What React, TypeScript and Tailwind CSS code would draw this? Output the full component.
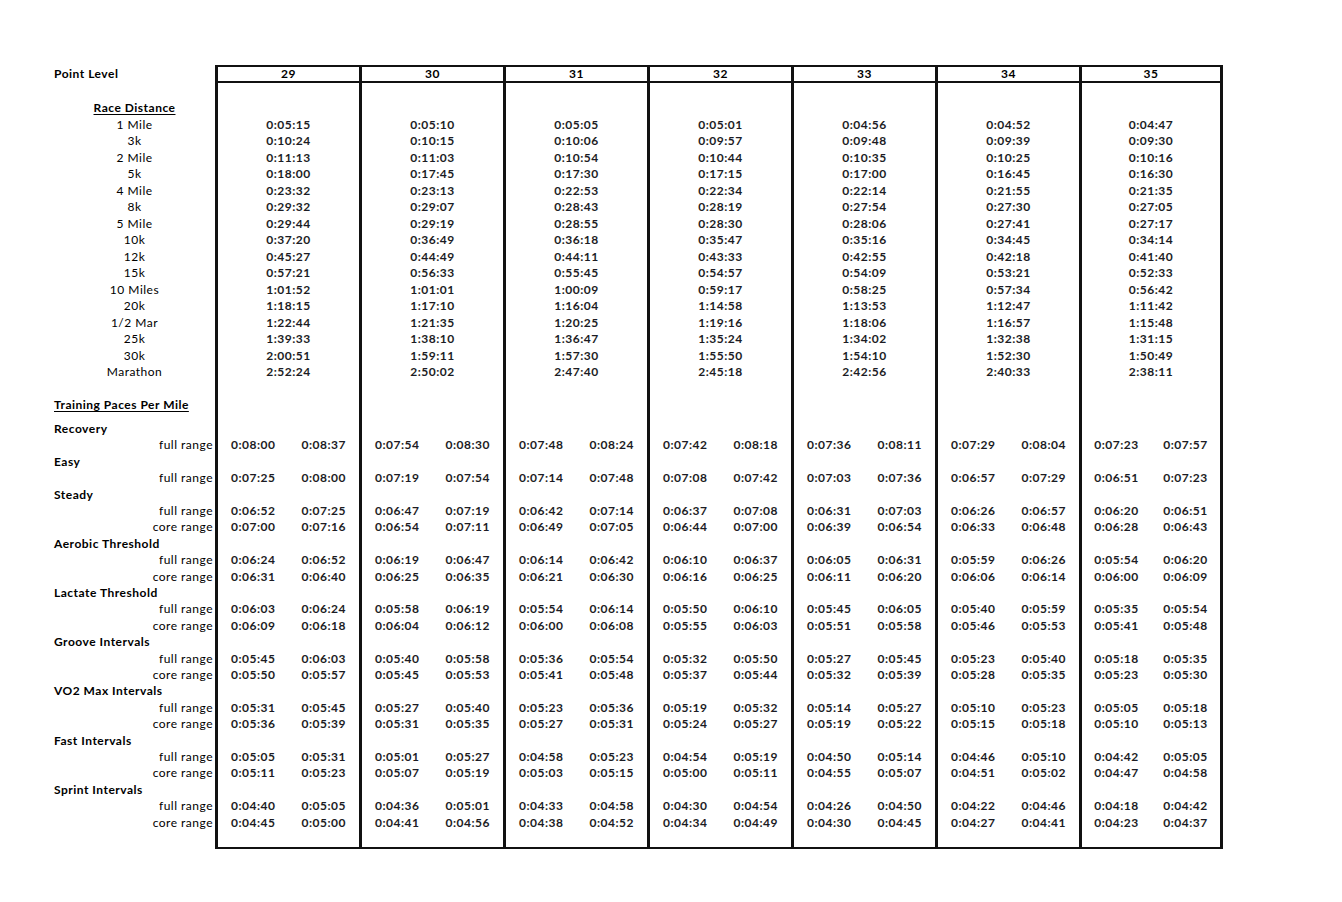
import React from "react";

const levels = [29, 30, 31, 32, 33, 34, 35];

const race: [string, string[]][] = [
  ["1 Mile", ["0:05:15", "0:05:10", "0:05:05", "0:05:01", "0:04:56", "0:04:52", "0:04:47"]],
  ["3k", ["0:10:24", "0:10:15", "0:10:06", "0:09:57", "0:09:48", "0:09:39", "0:09:30"]],
  ["2 Mile", ["0:11:13", "0:11:03", "0:10:54", "0:10:44", "0:10:35", "0:10:25", "0:10:16"]],
  ["5k", ["0:18:00", "0:17:45", "0:17:30", "0:17:15", "0:17:00", "0:16:45", "0:16:30"]],
  ["4 Mile", ["0:23:32", "0:23:13", "0:22:53", "0:22:34", "0:22:14", "0:21:55", "0:21:35"]],
  ["8k", ["0:29:32", "0:29:07", "0:28:43", "0:28:19", "0:27:54", "0:27:30", "0:27:05"]],
  ["5 Mile", ["0:29:44", "0:29:19", "0:28:55", "0:28:30", "0:28:06", "0:27:41", "0:27:17"]],
  ["10k", ["0:37:20", "0:36:49", "0:36:18", "0:35:47", "0:35:16", "0:34:45", "0:34:14"]],
  ["12k", ["0:45:27", "0:44:49", "0:44:11", "0:43:33", "0:42:55", "0:42:18", "0:41:40"]],
  ["15k", ["0:57:21", "0:56:33", "0:55:45", "0:54:57", "0:54:09", "0:53:21", "0:52:33"]],
  ["10 Miles", ["1:01:52", "1:01:01", "1:00:09", "0:59:17", "0:58:25", "0:57:34", "0:56:42"]],
  ["20k", ["1:18:15", "1:17:10", "1:16:04", "1:14:58", "1:13:53", "1:12:47", "1:11:42"]],
  ["1/2 Mar", ["1:22:44", "1:21:35", "1:20:25", "1:19:16", "1:18:06", "1:16:57", "1:15:48"]],
  ["25k", ["1:39:33", "1:38:10", "1:36:47", "1:35:24", "1:34:02", "1:32:38", "1:31:15"]],
  ["30k", ["2:00:51", "1:59:11", "1:57:30", "1:55:50", "1:54:10", "1:52:30", "1:50:49"]],
  ["Marathon", ["2:52:24", "2:50:02", "2:47:40", "2:45:18", "2:42:56", "2:40:33", "2:38:11"]],
];

type Range = string[]; // 14 values: pairs per level
type Pace = { name: string; full: Range; core?: Range };

const paces: Pace[] = [
  {
    name: "Recovery",
    full: ["0:08:00", "0:08:37", "0:07:54", "0:08:30", "0:07:48", "0:08:24", "0:07:42", "0:08:18", "0:07:36", "0:08:11", "0:07:29", "0:08:04", "0:07:23", "0:07:57"],
  },
  {
    name: "Easy",
    full: ["0:07:25", "0:08:00", "0:07:19", "0:07:54", "0:07:14", "0:07:48", "0:07:08", "0:07:42", "0:07:03", "0:07:36", "0:06:57", "0:07:29", "0:06:51", "0:07:23"],
  },
  {
    name: "Steady",
    full: ["0:06:52", "0:07:25", "0:06:47", "0:07:19", "0:06:42", "0:07:14", "0:06:37", "0:07:08", "0:06:31", "0:07:03", "0:06:26", "0:06:57", "0:06:20", "0:06:51"],
    core: ["0:07:00", "0:07:16", "0:06:54", "0:07:11", "0:06:49", "0:07:05", "0:06:44", "0:07:00", "0:06:39", "0:06:54", "0:06:33", "0:06:48", "0:06:28", "0:06:43"],
  },
  {
    name: "Aerobic Threshold",
    full: ["0:06:24", "0:06:52", "0:06:19", "0:06:47", "0:06:14", "0:06:42", "0:06:10", "0:06:37", "0:06:05", "0:06:31", "0:05:59", "0:06:26", "0:05:54", "0:06:20"],
    core: ["0:06:31", "0:06:40", "0:06:25", "0:06:35", "0:06:21", "0:06:30", "0:06:16", "0:06:25", "0:06:11", "0:06:20", "0:06:06", "0:06:14", "0:06:00", "0:06:09"],
  },
  {
    name: "Lactate Threshold",
    full: ["0:06:03", "0:06:24", "0:05:58", "0:06:19", "0:05:54", "0:06:14", "0:05:50", "0:06:10", "0:05:45", "0:06:05", "0:05:40", "0:05:59", "0:05:35", "0:05:54"],
    core: ["0:06:09", "0:06:18", "0:06:04", "0:06:12", "0:06:00", "0:06:08", "0:05:55", "0:06:03", "0:05:51", "0:05:58", "0:05:46", "0:05:53", "0:05:41", "0:05:48"],
  },
  {
    name: "Groove Intervals",
    full: ["0:05:45", "0:06:03", "0:05:40", "0:05:58", "0:05:36", "0:05:54", "0:05:32", "0:05:50", "0:05:27", "0:05:45", "0:05:23", "0:05:40", "0:05:18", "0:05:35"],
    core: ["0:05:50", "0:05:57", "0:05:45", "0:05:53", "0:05:41", "0:05:48", "0:05:37", "0:05:44", "0:05:32", "0:05:39", "0:05:28", "0:05:35", "0:05:23", "0:05:30"],
  },
  {
    name: "VO2 Max Intervals",
    full: ["0:05:31", "0:05:45", "0:05:27", "0:05:40", "0:05:23", "0:05:36", "0:05:19", "0:05:32", "0:05:14", "0:05:27", "0:05:10", "0:05:23", "0:05:05", "0:05:18"],
    core: ["0:05:36", "0:05:39", "0:05:31", "0:05:35", "0:05:27", "0:05:31", "0:05:24", "0:05:27", "0:05:19", "0:05:22", "0:05:15", "0:05:18", "0:05:10", "0:05:13"],
  },
  {
    name: "Fast Intervals",
    full: ["0:05:05", "0:05:31", "0:05:01", "0:05:27", "0:04:58", "0:05:23", "0:04:54", "0:05:19", "0:04:50", "0:05:14", "0:04:46", "0:05:10", "0:04:42", "0:05:05"],
    core: ["0:05:11", "0:05:23", "0:05:07", "0:05:19", "0:05:03", "0:05:15", "0:05:00", "0:05:11", "0:04:55", "0:05:07", "0:04:51", "0:05:02", "0:04:47", "0:04:58"],
  },
  {
    name: "Sprint Intervals",
    full: ["0:04:40", "0:05:05", "0:04:36", "0:05:01", "0:04:33", "0:04:58", "0:04:30", "0:04:54", "0:04:26", "0:04:50", "0:04:22", "0:04:46", "0:04:18", "0:04:42"],
    core: ["0:04:45", "0:05:00", "0:04:41", "0:04:56", "0:04:38", "0:04:52", "0:04:34", "0:04:49", "0:04:30", "0:04:45", "0:04:27", "0:04:41", "0:04:23", "0:04:37"],
  },
];

// one grid row: label column + 7 bordered level columns
function Row({
  label,
  cells,
  h,
  cellClass = "",
}: {
  label?: React.ReactNode;
  cells?: (i: number) => React.ReactNode;
  h: string;
  cellClass?: string;
}) {
  return (
    <div className={`grid grid-cols-[161px_repeat(7,144px)] ${h}`}>
      <div className="flex items-center min-w-0">{label}</div>
      {levels.map((_, i) => (
        <div
          key={i}
          className={`border-l-[3px] border-[#111] flex items-center ${i === 6 ? "border-r-[3px]" : ""} ${cellClass}`}
        >
          {cells ? cells(i) : null}
        </div>
      ))}
    </div>
  );
}

function Pair({ vals, i }: { vals: Range; i: number }) {
  return (
    <div className="grid grid-cols-2 w-full font-bold text-[#1c1c24]">
      <span className="text-center">{vals[i * 2]}</span>
      <span className="text-center">{vals[i * 2 + 1]}</span>
    </div>
  );
}

export default function App() {
  const trainingRows: React.ReactNode[] = [];
  paces.forEach((p) => {
    trainingRows.push(
      <Row
        key={p.name}
        h="h-[16.42px]"
        label={<span className="font-bold text-black">{p.name}</span>}
      />
    );
    trainingRows.push(
      <Row
        key={p.name + "-full"}
        h="h-[16.42px]"
        label={<span className="w-full text-right pr-[2px] text-black">full range</span>}
        cells={(i) => <Pair vals={p.full} i={i} />}
      />
    );
    if (p.core) {
      const core = p.core;
      trainingRows.push(
        <Row
          key={p.name + "-core"}
          h="h-[16.42px]"
          label={<span className="w-full text-right pr-[2px] text-black">core range</span>}
          cells={(i) => <Pair vals={core} i={i} />}
        />
      );
    }
  });

  return (
    <div className="min-h-screen bg-white pt-[65px] pl-[54px] font-['Lato',sans-serif] text-[12px] leading-none tracking-[0.5px]">
      {/* header */}
      <Row
        h="h-[18px]"
        cellClass="border-t-2 border-b-2 justify-center"
        label={<span className="font-bold text-black">Point Level</span>}
        cells={(i) => <span className="font-bold text-black">{levels[i]}</span>}
      />
      <Row h="h-[16.75px]" />

      {/* race distances */}
      <Row
        h="h-[16.5px]"
        label={
          <span className="w-full text-center font-bold underline underline-offset-[2px] text-black">
            Race Distance
          </span>
        }
      />
      {race.map(([name, vals]) => (
        <Row
          key={name}
          h="h-[16.5px]"
          cellClass="justify-center"
          label={<span className="w-full text-center text-black">{name}</span>}
          cells={(i) => <span className="font-bold text-[#1c1c24]">{vals[i]}</span>}
        />
      ))}
      <Row h="h-[16.5px]" />

      {/* training paces */}
      <Row
        h="h-[16.5px]"
        label={
          <span className="font-bold underline underline-offset-[2px] text-black whitespace-nowrap">
            Training Paces Per Mile
          </span>
        }
      />
      <Row h="h-[7.5px]" />
      {trainingRows}
      <Row h="h-[17.75px]" cellClass="border-b-2" />
    </div>
  );
}
